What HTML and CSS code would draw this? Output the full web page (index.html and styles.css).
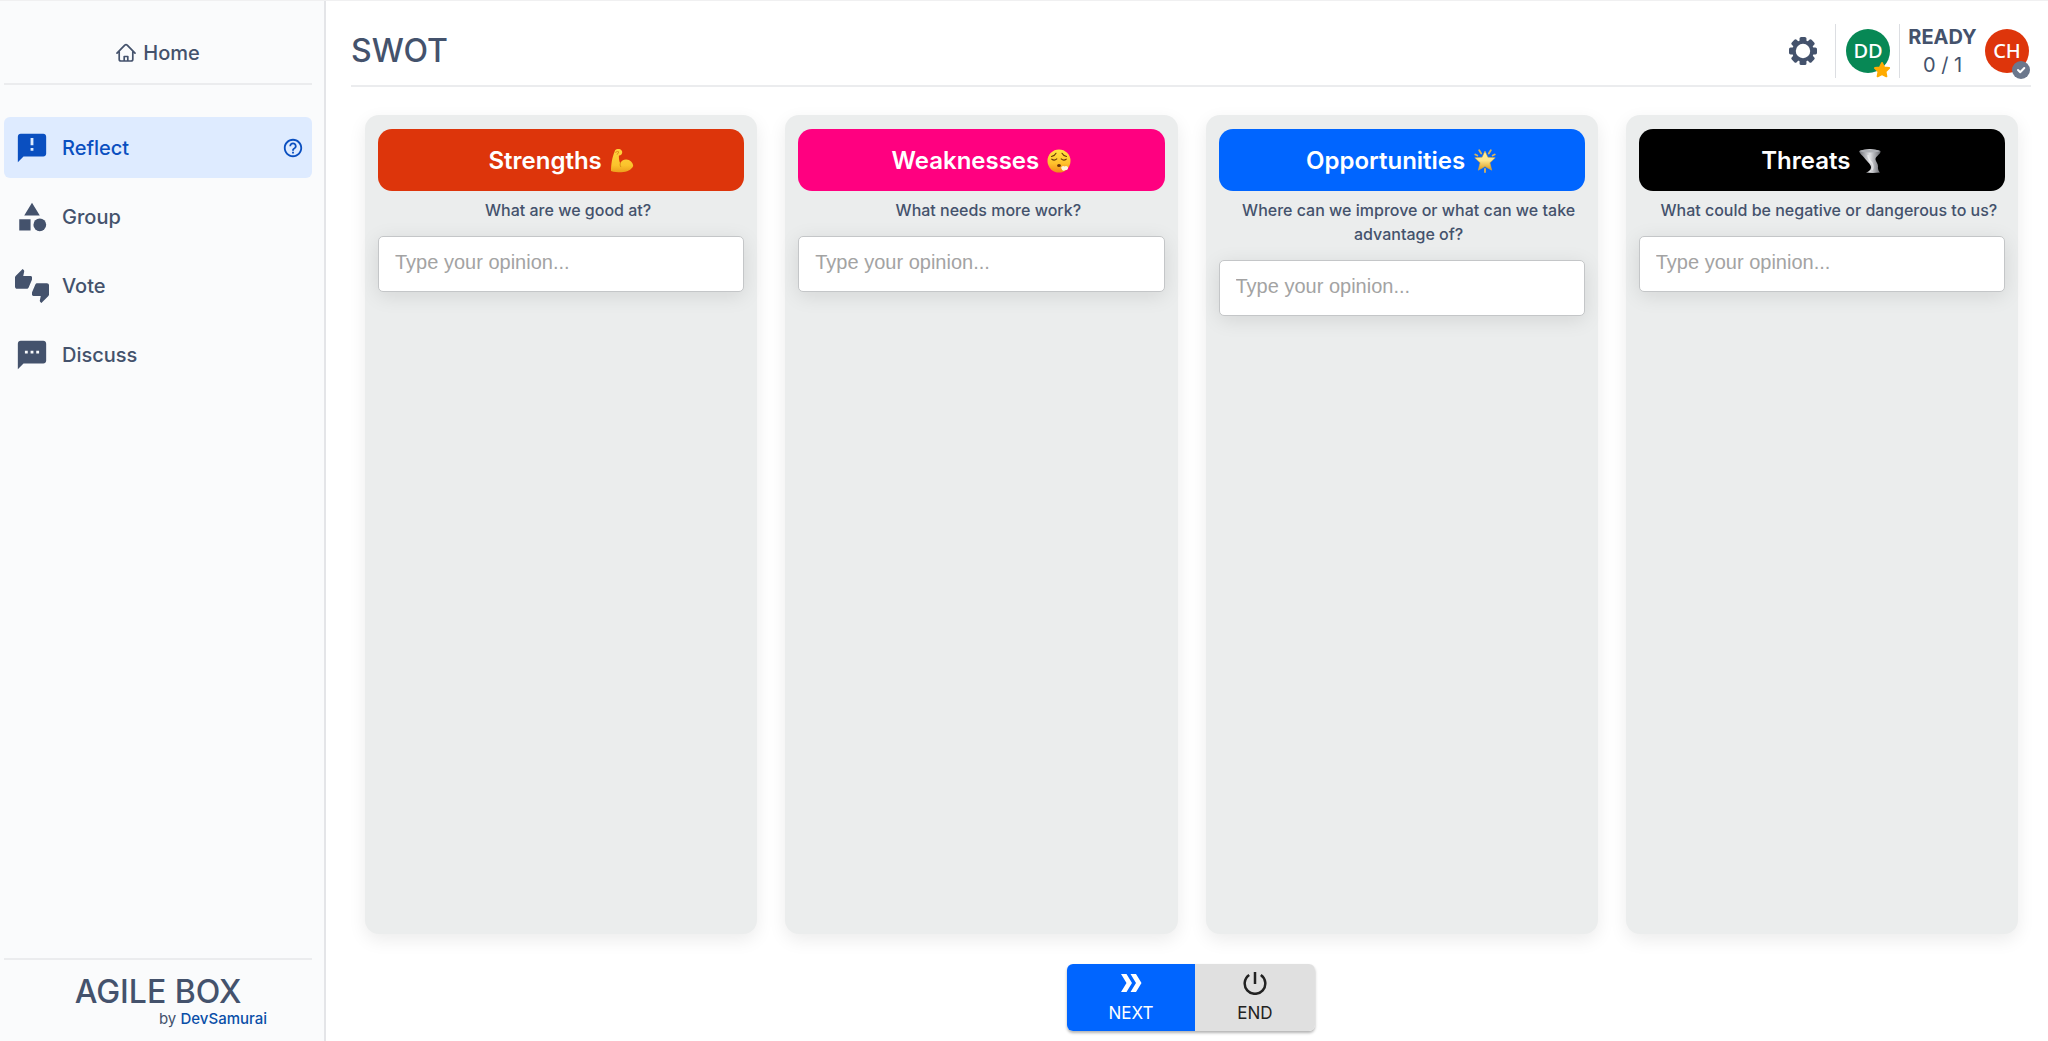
FILE: index.html
```html
<!DOCTYPE html>
<html lang="en">
<head>
<meta charset="utf-8">
<meta name="viewport" content="width=device-width, initial-scale=1">
<title>SWOT - Agile Box</title>
<link rel="stylesheet" href="styles.css">
</head>
<body>
<div class="app">
  <aside class="sidebar">
    <a class="home" href="#home">
      <svg class="home-icon" viewBox="0 0 20 20" aria-hidden="true"><path d="M1 10.200 8.800 2.100Q10 1 11.200 2.100L19 10.200M3.200 9v7.200q0 1.800 1.800 1.800h10q1.800 0 1.800-1.800V9M8.200 18v-4.500h3.600V18" fill="none" stroke="currentColor" stroke-width="1.700" stroke-linecap="round" stroke-linejoin="round"/></svg>
      <span>Home</span>
    </a>
    <nav class="steps" aria-label="Steps">
      <a class="step active" href="#reflect">
        <svg class="step-icon" viewBox="0 0 24 24" aria-hidden="true"><path d="M20 2H4c-1.100 0-1.990.9-1.990 2L2 22l4-4h14c1.100 0 2-.9 2-2V4c0-1.100-.9-2-2-2zm-7 12h-2v-2h2v2zm0-4h-2V5h2v5z"/></svg>
        <span>Reflect</span>
        <svg class="help-icon" viewBox="0 0 24 24" aria-label="Help"><path d="M11 18h2v-2h-2v2zm1-16C6.480 2 2 6.480 2 12s4.480 10 10 10 10-4.480 10-10S17.520 2 12 2zm0 18c-4.410 0-8-3.590-8-8s3.590-8 8-8 8 3.590 8 8-3.590 8-8 8zm0-14c-2.210 0-4 1.790-4 4h2c0-1.100.9-2 2-2s2 .9 2 2c0 2-3 1.750-3 5h2c0-2.250 3-2.500 3-5 0-2.210-1.790-4-4-4z"/></svg>
      </a>
      <a class="step" href="#group">
        <svg class="step-icon" viewBox="0 0 24 24" aria-hidden="true"><path d="M12 2 6.500 11h11zM3 13.500h8v8H3z"/><circle cx="17.500" cy="17.500" r="4.500"/></svg>
        <span>Group</span>
      </a>
      <a class="step" href="#vote">
        <svg class="step-icon" viewBox="0 0 24 24" aria-hidden="true"><path d="M12 6c0-.55-.45-1-1-1H5.820l.66-3.180.02-.23c0-.31-.13-.59-.33-.8L5.380 0 .44 4.940C.17 5.210 0 5.590 0 6v6.500c0 .83.67 1.500 1.500 1.500h6.750c.62 0 1.150-.38 1.380-.91l2.260-5.290c.07-.17.11-.36.11-.55V6zm10.500 4h-6.750c-.62 0-1.150.38-1.380.91l-2.260 5.290c-.07.17-.11.36-.11.55V18c0 .55.45 1 1 1h5.180l-.66 3.180-.02.24c0 .31.13.59.33.8l.79.78 4.940-4.940c.27-.27.44-.65.44-1.060v-6.500c0-.83-.67-1.500-1.500-1.500z"/></svg>
        <span>Vote</span>
      </a>
      <a class="step" href="#discuss">
        <svg class="step-icon" viewBox="0 0 24 24" aria-hidden="true"><path d="M20 2H4c-1.100 0-1.990.9-1.990 2L2 22l4-4h14c1.100 0 2-.9 2-2V4c0-1.100-.9-2-2-2zM9 11H7V9h2v2zm4 0h-2V9h2v2zm4 0h-2V9h2v2z"/></svg>
        <span>Discuss</span>
      </a>
    </nav>
    <footer class="brand">
      <div class="brand-name">AGILE BOX</div>
      <div class="brand-by">by <a href="#devsamurai">DevSamurai</a></div>
    </footer>
  </aside>

  <main class="main">
    <header class="topbar">
      <h1>SWOT</h1>
      <button class="gear" type="button" aria-label="Settings">
        <svg viewBox="0 0 26 26" aria-hidden="true"><g fill="currentColor"><g id="teeth"><rect x="9.800" y="0" width="6.400" height="26" rx="1.500"/><rect x="0" y="9.800" width="26" height="6.400" rx="1.500"/></g><use href="#teeth" transform="rotate(45 13 13)"/><circle cx="13" cy="13" r="10"/></g><circle cx="13" cy="13" r="6.700" fill="#fff"/></svg>
      </button>
      <div class="facilitator">
        <div class="avatar green">DD
          <svg class="star" viewBox="0 0 24 24" aria-hidden="true"><path d="m12 2.500 2.900 6 6.600.9-4.800 4.600 1.200 6.500-5.900-3.100-5.900 3.100 1.200-6.500-4.800-4.600 6.600-.9z" fill="#ffab00" stroke="#ffab00" stroke-width="2.500" stroke-linejoin="round"/></svg>
        </div>
      </div>
      <div class="ready"><strong>READY</strong><span>0 / 1</span></div>
      <div class="avatar red">CH
        <svg class="check" viewBox="0 0 18 18" aria-hidden="true"><circle cx="9" cy="9" r="9" fill="#6b778c"/><path d="m6 9 2.200 2.200L12.300 7" fill="none" stroke="#fff" stroke-width="2" stroke-linecap="round" stroke-linejoin="round"/></svg>
      </div>
    </header>

    <section class="board">
      <article class="column">
        <h2 class="title strengths">Strengths
          <svg class="emoji" viewBox="0 0 24 24" aria-hidden="true"><defs><linearGradient id="arm" x2="0" y2="1"><stop stop-color="#ffd43d"/><stop offset=".7" stop-color="#fbc32c"/><stop offset="1" stop-color="#eda01d"/></linearGradient></defs><path d="M5 1.500C6.500-.3 10-.4 11.600 1.400c.9 1 .8 3-.2 4-.7.800-1.600 1-2.500 1-.1 2.800.2 5.200 1.300 7.900 1.100-2.600 3.500-4.100 6.200-3.900 3.500.2 6.600 3.100 6.800 6.600-1.800 4-6.400 6.300-12.200 6.200-3.500 0-7-.3-10-1.300C1 16.500 1.900 8.500 5 1.500z" fill="url(#arm)"/><path d="M5.600 3.200q1.700-1.500 3.100-.4M8.500 3.500l-1.200 1.800M10.200 14.300q-.7 1.800.5 3.500" fill="none" stroke="#d98616" stroke-width=".9" stroke-linecap="round"/></svg>
        </h2>
        <label class="prompt" for="s">What are we good at?</label>
        <input id="s" class="opinion" type="text" placeholder="Type your opinion...">
      </article>
      <article class="column">
        <h2 class="title weaknesses">Weaknesses
          <svg class="emoji" viewBox="0 0 24 24" aria-hidden="true"><defs><linearGradient id="face" x2="0" y2="1"><stop stop-color="#ffe340"/><stop offset=".6" stop-color="#ffc12c"/><stop offset="1" stop-color="#f28a18"/></linearGradient></defs><circle cx="12" cy="12" r="11.500" fill="url(#face)"/><path d="M4.500 7.500Q8 6.500 9 4.300M19.500 7.500Q16 6.500 15 4.300M4.800 10.200q2.600 2 5-.3M14.200 9.900q2.400 2.300 5 .3" fill="none" stroke="#6b3a0a" stroke-width="1.100" stroke-linecap="round"/><ellipse cx="12" cy="16.500" rx="1.900" ry="1.600" fill="#6b3008"/><path d="M14.500 18c.8-1.200 2.300-1.400 3-.5 1.300-1.300 3.600-.4 3.600 1.300s-1.500 2.600-2.700 2.200c-1.200 1.300-3.600.7-3.600-.9-.7-.6-.8-1.400-.3-2.100z" fill="#fff4dc"/></svg>
        </h2>
        <label class="prompt" for="w">What needs more work?</label>
        <input id="w" class="opinion" type="text" placeholder="Type your opinion...">
      </article>
      <article class="column">
        <h2 class="title opportunities">Opportunities
          <svg class="emoji" viewBox="0 0 24 24" aria-hidden="true"><defs><linearGradient id="glow" x2="0" y2="1"><stop stop-color="#fff3a0"/><stop offset=".5" stop-color="#fde58b"/><stop offset="1" stop-color="#d89a1c"/></linearGradient></defs><path d="m6.200 1.200 2 3.300M17.800 1.200l-2 3.300M2.300 5.500l2 1M21.700 5.500l-2 1M12 20v3" stroke="#d8b45c" stroke-width="1.800" stroke-linecap="round"/><path d="m12 2 2.900 6.200 7.300.6-5.300 5 1.800 7.400-6.700-3.700-6.700 3.700 1.800-7.400-5.300-5 7.300-.6z" fill="url(#glow)" stroke="#d5a640" stroke-width=".6" stroke-linejoin="round"/></svg>
        </h2>
        <label class="prompt" for="o">Where can we improve or what can we take advantage of?</label>
        <input id="o" class="opinion" type="text" placeholder="Type your opinion...">
      </article>
      <article class="column">
        <h2 class="title threats">Threats
          <svg class="emoji" viewBox="0 0 24 24" aria-hidden="true"><defs><linearGradient id="wind"><stop stop-color="#6d6e74"/><stop offset=".5" stop-color="#e2e3e6"/><stop offset="1" stop-color="#66676d"/></linearGradient></defs><path d="M1 2Q12-2 22.500 2c.5 3-4.800 5-5 8-.3 2.500 3 4.500 2.500 8-.2 2 .5 4 2 5.500-5 .6-10 .5-14 0 3-1 5.300-3 5-5.500-.3-3-4.500-6-7-9.500C4.500 6.500 1.500 4.500 1 2z" fill="url(#wind)"/><ellipse cx="11.800" cy="2" rx="10" ry="1.500" fill="#aeb0b5"/><path d="M10 6q0 4 4 8 2 4 0 7" fill="none" stroke="#fff" stroke-opacity=".5" stroke-width="1.500"/></svg>
        </h2>
        <label class="prompt" for="t">What could be negative or dangerous to us?</label>
        <input id="t" class="opinion" type="text" placeholder="Type your opinion...">
      </article>
    </section>

    <div class="actions">
      <button class="action next" type="button">
        <svg viewBox="0 0 24 24" aria-hidden="true"><path d="M2 3h5.500L13 12l-5.500 9H2l5.500-9zM11.500 3H17l5.500 9-5.500 9h-5.500l5.500-9z" fill="currentColor"/></svg>
        <span>NEXT</span>
      </button>
      <button class="action end" type="button">
        <svg viewBox="0 0 24 24" aria-hidden="true"><path d="M12 1v12M6.200 4a10.300 10.300 0 1 0 11.600 0" fill="none" stroke="currentColor" stroke-width="2.500"/></svg>
        <span>END</span>
      </button>
    </div>
  </main>
</div>
</body>
</html>
```
FILE: styles.css
```css
* {
  box-sizing: border-box;
}

body {
  margin: 0;
  background: #fff;
  color: #44526c;
  font-family: Inter, "Liberation Sans", sans-serif;
  font-size: 20px;
  line-height: 28px;
}

a {
  color: inherit;
  text-decoration: none;
}

button,
input {
  font: inherit;
}

.app {
  display: flex;
  min-height: 100vh;
  border-top: 1px solid #f0f0f1;
}

/* Sidebar */
.sidebar {
  display: flex;
  flex: 0 0 326px;
  flex-direction: column;
  padding: 0 12px 0 4px;
  border-right: 2px solid #e4e5e8;
  background: #fafbfc;
}

.home {
  display: flex;
  align-items: center;
  justify-content: center;
  gap: 7px;
  height: 84px;
  padding-top: 22px;
  border-bottom: 2px solid #ebecee;
  font-weight: 500;
}

.home-icon {
  width: 20px;
  height: 20px;
}

.steps {
  display: flex;
  flex-direction: column;
  gap: 8px;
  padding-top: 32px;
}

.step {
  display: flex;
  align-items: center;
  gap: 13px;
  height: 61px;
  padding: 0 8px 0 11px;
  border-radius: 6px;
  font-weight: 500;
}

.step.active {
  background: #deebff;
  color: #0a4fc0;
}

.step-icon {
  width: 34px;
  height: 34px;
  fill: currentColor;
}

.help-icon {
  width: 22px;
  height: 22px;
  margin-left: auto;
  fill: currentColor;
}

.brand {
  display: flex;
  flex-direction: column;
  align-items: center;
  margin-top: auto;
  padding: 14px 0 13px;
  border-top: 2px solid #ebecee;
}

.brand-name {
  font-size: 32px;
  font-weight: 500;
  line-height: 36px;
}

.brand-by {
  padding-left: 110px;
  font-size: 15px;
  line-height: 18px;
}

.brand-by a {
  color: #0a4fa8;
  font-weight: 500;
}

/* Main area */
.main {
  display: flex;
  flex: 1;
  flex-direction: column;
  min-width: 0;
  padding: 0 17px 10px 25px;
}

.topbar {
  display: flex;
  align-items: center;
  height: 86px;
  padding: 16px 2px 0 0;
  border-bottom: 2px solid #ebecee;
}

h1 {
  margin: 0 auto 0 0;
  font-size: 32px;
  font-weight: 500;
  line-height: 40px;
}

.gear {
  display: flex;
  margin-right: 18px;
  padding: 0;
  border: 0;
  background: none;
  color: #44526c;
}

.gear svg {
  width: 28px;
  height: 28px;
}

.facilitator {
  display: flex;
  align-items: center;
  height: 54px;
  padding: 0 9px 0 10px;
  border: solid #dcdee2;
  border-width: 0 1px;
}

.avatar {
  position: relative;
  width: 44px;
  height: 44px;
  border-radius: 50%;
  color: #fff;
  font-family: "Noto Sans", sans-serif;
  font-weight: 500;
  line-height: 44px;
  text-align: center;
}

.green {
  background: #078855;
}

.red {
  background: #de350b;
}

.star,
.check {
  position: absolute;
  right: -1px;
  bottom: -6px;
  width: 18px;
  height: 18px;
}

.ready {
  display: flex;
  flex-direction: column;
  align-items: center;
  width: 85px;
}

/* Board */
.board {
  display: grid;
  flex: 1;
  grid-template-columns: repeat(4, 1fr);
  gap: 28px;
  padding: 28px 13px 30px 14px;
}

.column {
  display: flex;
  flex-direction: column;
  padding: 14px 13px;
  border-radius: 14px;
  background: #ebeded;
  box-shadow: 0 6px 18px rgba(0, 0, 0, .08);
}

.title {
  display: flex;
  align-items: center;
  justify-content: center;
  gap: 8px;
  height: 62px;
  margin: 0;
  padding-top: 1px;
  border-radius: 14px;
  color: #fff;
  font-size: 24px;
  font-weight: 600;
}

.emoji {
  width: 24px;
  height: 24px;
}

.strengths {
  background: #dd350b;
}

.weaknesses {
  background: #ff0080;
}

.opportunities {
  background: #0065ff;
}

.threats {
  background: #000;
}

.prompt {
  padding: 7px 0 14px 14px;
  font-size: 16px;
  font-weight: 500;
  line-height: 24px;
  text-align: center;
}

.opinion {
  width: 100%;
  height: 56px;
  padding: 0 16px 4px;
  border: 1px solid #c4c6c8;
  border-radius: 5px;
  outline: 0;
  background: #fff;
  box-shadow: 0 4px 20px rgba(0, 0, 0, .1);
  font-family: "Liberation Sans", sans-serif;
}

.opinion::placeholder {
  color: #a3a3a3;
  opacity: 1;
}

/* Bottom actions */
.actions {
  display: flex;
  align-self: center;
  overflow: hidden;
  border-radius: 6px;
  box-shadow: 0 2px 3px rgba(0, 0, 0, .3);
}

.action {
  display: flex;
  flex-direction: column;
  align-items: center;
  gap: 6px;
  height: 67px;
  padding: 7px 0 0;
  border: 0;
  font-size: 17px;
  line-height: 24px;
}

.action svg {
  width: 24px;
  height: 24px;
}

.next {
  width: 128px;
  background: #0065ff;
  color: #fff;
}

.end {
  width: 120px;
  background: #e0e0e0;
  color: #222;
}
```
